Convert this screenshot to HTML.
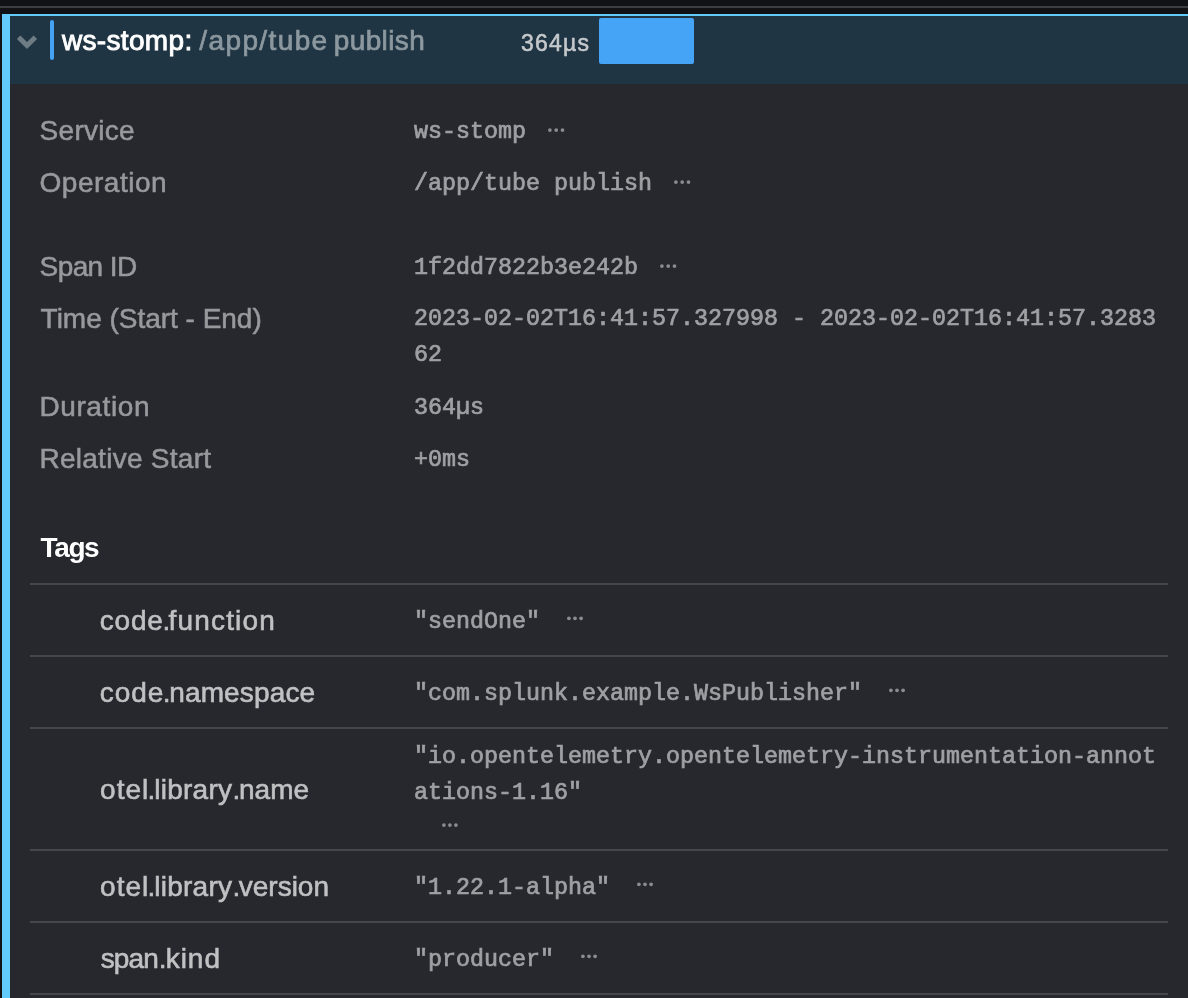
<!DOCTYPE html>
<html><head><meta charset="utf-8">
<style>
*{margin:0;padding:0;box-sizing:border-box}
html,body{width:1188px;height:998px;overflow:hidden;background:#111216}
body{position:relative;font-family:"Liberation Sans",sans-serif}
.abs{position:absolute}
#txt{position:absolute;left:0;top:0;width:1188px;height:998px;will-change:transform;transform:translateZ(0)}
.t{position:absolute;white-space:nowrap;line-height:40px;height:40px}
.val{font-family:"Liberation Mono","Liberation Sans",sans-serif;font-size:23.33px;color:#9fa0a4;left:414px;-webkit-text-stroke:0.7px #9fa0a4}
.dots{display:inline-block;vertical-align:baseline}
.hr{position:absolute;left:30px;width:1138px;height:2px;background:#45464c}
</style></head><body>
<div class="abs" style="left:0;top:6px;width:1188px;height:2px;background:#3d3e43"></div>
<div class="abs" style="left:2px;top:14px;width:1186px;height:984px;background:#62cbfa"></div>
<div class="abs" style="left:10px;top:16px;width:1178px;height:68px;background:#203543"></div>
<div class="abs" style="left:10px;top:84px;width:1178px;height:914px;background:#27282e"></div>
<svg class="abs" style="left:0;top:0" width="60" height="70" viewBox="0 0 60 70"><polygon points="16.9,39.1 20.4,35.6 27,42 33.6,35.6 37.1,39.1 27,48.9" fill="#6d7c85"/></svg>
<div class="abs" style="left:50px;top:20px;width:4px;height:40px;border-radius:2px;background:#45a3f5"></div>
<div class="abs" style="left:599px;top:18px;width:95px;height:46px;border-radius:2px;background:#45a4f5"></div>
<div id="txt">
<div class="t" style="left:62.0px;top:21px;font-size:28px;color:#fff;-webkit-text-stroke:0.9px #fff;letter-spacing:0.325px;">ws-stomp:</div>
<div class="t" style="left:199.3px;top:21px;font-size:28px;color:#8c989f;-webkit-text-stroke:0.7px #8c989f;letter-spacing:1.387px;">/app/tube</div>
<div class="t" style="left:333.8px;top:21px;font-size:28px;color:#8c989f;-webkit-text-stroke:0.7px #8c989f;letter-spacing:0.367px;">publish</div>
<div class="t" style="left:521.0px;top:23px;font-size:23px;color:#c5c9cc;-webkit-text-stroke:0.55px #c5c9cc;letter-spacing:1.2px;">364µs</div>
<div class="t" style="left:39.6px;top:111px;font-size:28px;color:#98999d;-webkit-text-stroke:0.55px #98999d;letter-spacing:0.283px;">Service</div>
<div class="t" style="left:39.6px;top:163px;font-size:28px;color:#98999d;-webkit-text-stroke:0.55px #98999d;letter-spacing:0.5px;">Operation</div>
<div class="t" style="left:39.6px;top:247px;font-size:28px;color:#98999d;-webkit-text-stroke:0.55px #98999d;letter-spacing:-0.6px;">Span ID</div>
<div class="t" style="left:40.6px;top:299px;font-size:28px;color:#98999d;-webkit-text-stroke:0.55px #98999d;letter-spacing:-0.018px;">Time (Start - End)</div>
<div class="t" style="left:39.4px;top:387px;font-size:28px;color:#98999d;-webkit-text-stroke:0.55px #98999d;letter-spacing:0.614px;">Duration</div>
<div class="t" style="left:39.4px;top:439px;font-size:28px;color:#98999d;-webkit-text-stroke:0.55px #98999d;letter-spacing:0.277px;">Relative Start</div>
<div class="t" style="left:40.6px;top:527.6px;font-size:28px;font-weight:bold;color:#fff;letter-spacing:-1.4px;">Tags</div>
<div class="t" style="left:99.7px;top:601px;font-size:28px;color:#c0c1c3;-webkit-text-stroke:0.6px #c0c1c3;letter-spacing:0.833px;">code</div>
<div class="t" style="left:162.6px;top:601px;font-size:28px;color:#c0c1c3;-webkit-text-stroke:0.6px #c0c1c3;">.</div>
<div class="t" style="left:168.6px;top:601px;font-size:28px;color:#c0c1c3;-webkit-text-stroke:0.6px #c0c1c3;letter-spacing:1.157px;">function</div>
<div class="t" style="left:99.7px;top:673px;font-size:28px;color:#c0c1c3;-webkit-text-stroke:0.6px #c0c1c3;letter-spacing:1.0px;">code</div>
<div class="t" style="left:162.7px;top:673px;font-size:28px;color:#c0c1c3;-webkit-text-stroke:0.6px #c0c1c3;">.</div>
<div class="t" style="left:169.2px;top:673px;font-size:28px;color:#c0c1c3;-webkit-text-stroke:0.6px #c0c1c3;letter-spacing:0.15px;">namespace</div>
<div class="t" style="left:100.1px;top:770px;font-size:28px;color:#c0c1c3;-webkit-text-stroke:0.6px #c0c1c3;letter-spacing:1.0px;">otel</div>
<div class="t" style="left:147.5px;top:770px;font-size:28px;color:#c0c1c3;-webkit-text-stroke:0.6px #c0c1c3;">.</div>
<div class="t" style="left:154.2px;top:770px;font-size:28px;color:#c0c1c3;-webkit-text-stroke:0.6px #c0c1c3;letter-spacing:0.267px;">library</div>
<div class="t" style="left:232.4px;top:770px;font-size:28px;color:#c0c1c3;-webkit-text-stroke:0.6px #c0c1c3;">.</div>
<div class="t" style="left:239.0px;top:770px;font-size:28px;color:#c0c1c3;-webkit-text-stroke:0.6px #c0c1c3;letter-spacing:0.033px;">name</div>
<div class="t" style="left:100.1px;top:867px;font-size:28px;color:#c0c1c3;-webkit-text-stroke:0.6px #c0c1c3;letter-spacing:1.0px;">otel</div>
<div class="t" style="left:147.5px;top:867px;font-size:28px;color:#c0c1c3;-webkit-text-stroke:0.6px #c0c1c3;">.</div>
<div class="t" style="left:154.2px;top:867px;font-size:28px;color:#c0c1c3;-webkit-text-stroke:0.6px #c0c1c3;letter-spacing:0.267px;">library</div>
<div class="t" style="left:232.4px;top:867px;font-size:28px;color:#c0c1c3;-webkit-text-stroke:0.6px #c0c1c3;">.</div>
<div class="t" style="left:238.8px;top:867px;font-size:28px;color:#c0c1c3;-webkit-text-stroke:0.6px #c0c1c3;letter-spacing:-0.017px;">version</div>
<div class="t" style="left:100.7px;top:939px;font-size:28px;color:#c0c1c3;-webkit-text-stroke:0.6px #c0c1c3;letter-spacing:-0.9px;">span</div>
<div class="t" style="left:158.7px;top:939px;font-size:28px;color:#c0c1c3;-webkit-text-stroke:0.6px #c0c1c3;">.</div>
<div class="t" style="left:165.7px;top:939px;font-size:28px;color:#c0c1c3;-webkit-text-stroke:0.6px #c0c1c3;letter-spacing:0.967px;">kind</div>
<div class="t val" style="top:111.5px;">ws-stomp<svg class="dots" style="margin-left:22px;overflow:visible" width="17" height="10" viewBox="0 0 17 10"><g fill="#8b8c91"><circle cx="1.90" cy="2.1" r="1.85"/><circle cx="8.20" cy="2.1" r="1.85"/><circle cx="14.50" cy="2.1" r="1.85"/></g></svg></div>
<div class="t val" style="top:163.5px;">/app/tube publish<svg class="dots" style="margin-left:22px;overflow:visible" width="17" height="10" viewBox="0 0 17 10"><g fill="#8b8c91"><circle cx="1.90" cy="2.1" r="1.85"/><circle cx="8.20" cy="2.1" r="1.85"/><circle cx="14.50" cy="2.1" r="1.85"/></g></svg></div>
<div class="t val" style="top:247.5px;">1f2dd7822b3e242b<svg class="dots" style="margin-left:22px;overflow:visible" width="17" height="10" viewBox="0 0 17 10"><g fill="#8b8c91"><circle cx="1.90" cy="2.1" r="1.85"/><circle cx="8.20" cy="2.1" r="1.85"/><circle cx="14.50" cy="2.1" r="1.85"/></g></svg></div>
<div class="t val" style="top:299.0px;">2023-02-02T16:41:57.327998 - 2023-02-02T16:41:57.3283</div>
<div class="t val" style="top:335.0px;">62</div>
<div class="t val" style="top:387.5px;">364µs</div>
<div class="t val" style="top:439.5px;">+0ms</div>
<div class="t val" style="top:601.5px;">"sendOne"<svg class="dots" style="margin-left:27.2px;overflow:visible" width="17" height="10" viewBox="0 0 17 10"><g fill="#8b8c91"><circle cx="1.90" cy="0.3500000000000001" r="1.85"/><circle cx="8.00" cy="0.3500000000000001" r="1.85"/><circle cx="14.10" cy="0.3500000000000001" r="1.85"/></g></svg></div>
<div class="t val" style="top:673.5px;">"com.splunk.example.WsPublisher"<svg class="dots" style="margin-left:27.2px;overflow:visible" width="17" height="10" viewBox="0 0 17 10"><g fill="#8b8c91"><circle cx="1.90" cy="0.3500000000000001" r="1.85"/><circle cx="8.00" cy="0.3500000000000001" r="1.85"/><circle cx="14.10" cy="0.3500000000000001" r="1.85"/></g></svg></div>
<div class="t val" style="top:736.5px;">"io.opentelemetry.opentelemetry-instrumentation-annot</div>
<div class="t val" style="top:772.5px;">ations-1.16"</div>
<div class="t" style="left:442.2px;top:807.5px"><svg class="dots" style="margin-left:0px;overflow:visible" width="17" height="10" viewBox="0 0 17 10"><g fill="#8b8c91"><circle cx="1.90" cy="2.1" r="1.85"/><circle cx="7.90" cy="2.1" r="1.85"/><circle cx="13.90" cy="2.1" r="1.85"/></g></svg></div>
<div class="t val" style="top:867.5px;">"1.22.1-alpha"<svg class="dots" style="margin-left:27.2px;overflow:visible" width="17" height="10" viewBox="0 0 17 10"><g fill="#8b8c91"><circle cx="1.90" cy="0.3500000000000001" r="1.85"/><circle cx="8.00" cy="0.3500000000000001" r="1.85"/><circle cx="14.10" cy="0.3500000000000001" r="1.85"/></g></svg></div>
<div class="t val" style="top:939.5px;">"producer"<svg class="dots" style="margin-left:27.2px;overflow:visible" width="17" height="10" viewBox="0 0 17 10"><g fill="#8b8c91"><circle cx="1.90" cy="0.3500000000000001" r="1.85"/><circle cx="8.00" cy="0.3500000000000001" r="1.85"/><circle cx="14.10" cy="0.3500000000000001" r="1.85"/></g></svg></div>
</div>
<div class="hr" style="top:583px"></div>
<div class="hr" style="top:655px"></div>
<div class="hr" style="top:727px"></div>
<div class="hr" style="top:849px"></div>
<div class="hr" style="top:921px"></div>
<div class="hr" style="top:993px"></div>
</body></html>
